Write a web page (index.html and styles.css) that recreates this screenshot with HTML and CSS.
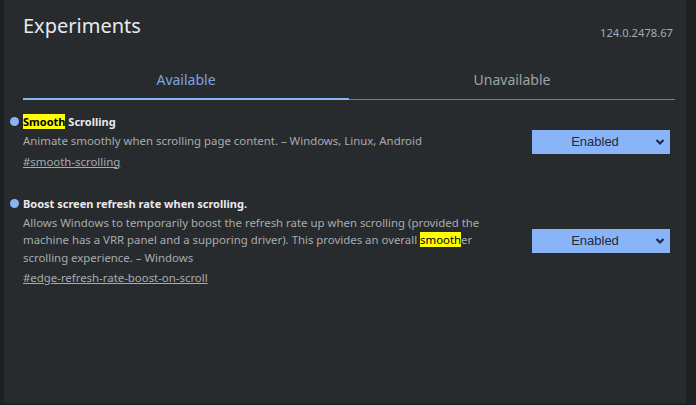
FILE: index.html
```html
<!DOCTYPE html>
<html>
<head>
<meta charset="utf-8">
<link rel="stylesheet" href="styles.css">
</head>
<body>
<div class="page">
  <header class="head">
    <h1 class="title">Experiments</h1>
    <div class="version">124.0.2478.67</div>
  </header>
  <nav class="tabs">
    <div class="tab active">Available</div>
    <div class="tab">Unavailable</div>
  </nav>
  <section class="list">
    <div class="exp">
      <div class="exp-text">
        <h2 class="exp-name"><span class="dot"></span><mark>Smooth</mark> Scrolling</h2>
        <p class="desc">Animate smoothly when scrolling page content. – Windows, Linux, Android</p>
        <div class="link-row"><a class="link">#smooth-scrolling</a></div>
      </div>
      <div class="select">Enabled<svg class="chev" width="10" height="8" viewBox="0 0 10 8"><path d="M1.5 2 L5 5.5 L8.5 2" fill="none" stroke="#1d2a44" stroke-width="2.2"/></svg></div>
    </div>
    <div class="exp">
      <div class="exp-text">
        <h2 class="exp-name"><span class="dot"></span>Boost screen refresh rate when scrolling.</h2>
        <p class="desc">Allows Windows to temporarily boost the refresh rate up when scrolling (provided the machine has a VRR panel and a supporing driver). This provides an overall <mark>smooth</mark>er scrolling experience. – Windows</p>
        <div class="link-row"><a class="link">#edge-refresh-rate-boost-on-scroll</a></div>
      </div>
      <div class="select">Enabled<svg class="chev" width="10" height="8" viewBox="0 0 10 8"><path d="M1.5 2 L5 5.5 L8.5 2" fill="none" stroke="#1d2a44" stroke-width="2.2"/></svg></div>
    </div>
  </section>
</div>
</body>
</html>
```
FILE: styles.css
```css
html, body {
  margin: 0;
  padding: 0;
  background: #1e2123;
  height: 100%;
}
body {
  font-family: "Noto Sans", "Open Sans", sans-serif;
  overflow: hidden;
}
.page {
  margin-left: 4px;
  width: 682px;
  height: 403px;
  background: #282b2d;
  box-sizing: border-box;
  padding: 0 16px 0 19px;
}
.head {
  display: flex;
  justify-content: space-between;
  align-items: flex-end;
  height: 44px;
}
.title {
  margin: 0;
  font-size: 20px;
  font-weight: 400;
  color: #e8eaed;
  line-height: 30px;
  padding-bottom: 3px;
}
.version {
  font-size: 11.2px;
  color: #a9acaf;
  padding-bottom: 4px;
  margin-right: -3px;
}
.tabs {
  display: flex;
  margin-top: 24px;
  margin-right: -5px;
  border-bottom: 1px solid #7b7f83;
}
.tab {
  flex: 1;
  text-align: center;
  font-size: 14px;
  color: #9fa3a7;
  padding-bottom: 7px;
  line-height: 24px;
}
.tab.active {
  color: #7fa4e0;
  box-shadow: inset 0 -2px 0 #8ab4f8;
  margin-bottom: -1px;
  padding-bottom: 8px;
}
.list {
  margin-left: -19px;
  padding-top: 12px;
}
.exp {
  display: flex;
  align-items: center;
  justify-content: space-between;
  margin-bottom: 22px;
}
.exp-text {
  padding-left: 19px;
}
.exp-name {
  position: relative;
  margin: 0;
  font-size: 11px;
  font-weight: 700;
  color: #e8eaed;
  line-height: 20px;
}
.dot {
  position: absolute;
  left: -13px;
  top: 5px;
  width: 9px;
  height: 9px;
  border-radius: 50%;
  background: #8ab4f8;
}
mark {
  background: #ffff00;
  color: #000;
}
.desc {
  margin: 0;
  font-size: 11.4px;
  color: #a8abae;
  line-height: 17.5px;
  max-width: 462px;
}
.link-row {
  margin-top: 2px;
  font-size: 11.4px;
  line-height: 20px;
}
.link {
  color: #a8abae;
  text-decoration: underline;
}
.select {
  position: relative;
  width: 138px;
  height: 24px;
  background: #8ab4f8;
  color: #1d2a44;
  font-family: "Liberation Sans", Arial, sans-serif;
  font-size: 13px;
  line-height: 24px;
  text-align: center;
  box-sizing: border-box;
  padding-right: 12px;
  flex: none;
}
.chev {
  position: absolute;
  right: 5px;
  top: 8px;
}
```
